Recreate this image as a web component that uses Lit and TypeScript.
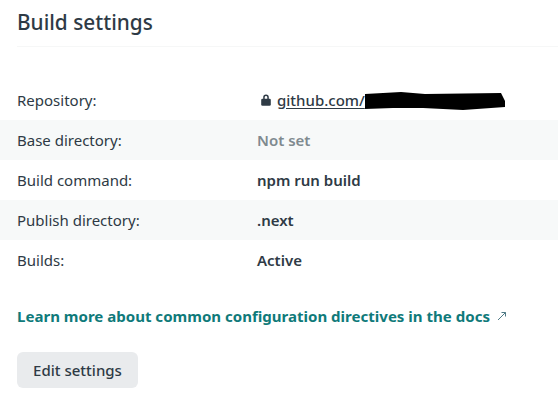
import { LitElement, html, css } from "lit";
import { customElement } from "lit/decorators.js";

const rows: [string, string, string][] = [
  ["Base directory:", "Not set", "muted"],
  ["Build command:", "npm run build", ""],
  ["Publish directory:", ".next", ""],
  ["Builds:", "Active", ""],
];

@customElement("app-root")
export class AppRoot extends LitElement {
  static styles = css`
    :host {
      display: block;
      width: 558px;
      height: 407px;
      overflow: hidden;
      background: #fff;
      font-family: "Noto Sans", "Open Sans", sans-serif;
      color: #2e3a45;
      font-size: 15px;
    }
    .head { padding: 0 0 0 17px; }
    h1 {
      margin: 0;
      height: 47px;
      box-sizing: border-box;
      padding-top: 7px;
      font-size: 20.8px;
      line-height: 30px;
      font-weight: 500;
      color: #2e3a45;
      border-bottom: 1px solid #f6f7f7;
    }
    .list { margin-top: 33px; }
    .row {
      display: grid;
      grid-template-columns: 240px 1fr;
      height: 40px;
      align-items: center;
      padding-left: 17px;
    }
    .row:nth-child(even) { background: #f7f9f9; }
    .value { font-weight: 600; color: #2e3a45; }
    .muted { color: #7f8a8f; }
    .repo { display: flex; align-items: center; gap: 5px; font-weight: 500; padding-left: 3px; }
    .repo a { color: #2e3a45; text-decoration: underline; text-underline-offset: 2px; }
    .repo .wrap { display: flex; align-items: center; }
    .scribble { display: block; margin-left: -2px; }
    .doc {
      display: flex;
      align-items: center;
      gap: 7px;
      margin: 25px 0 0 17px;
      height: 22px;
      font-size: 15.06px;
      font-weight: 700;
      color: #0f7a7a;
      text-decoration: none;
    }
    .doc svg { display: block; }
    button {
      display: block;
      margin: 25px 0 0 17px;
      width: 121px;
      height: 36px;
      border: 0;
      border-radius: 6px;
      background: #e9ebed;
      color: #2e3a45;
      font: 500 15px "Noto Sans", "Open Sans", sans-serif;
      padding: 0;
    }
  `;

  render() {
    return html`
      <div class="head"><h1>Build settings</h1></div>
      <div class="list">
        <div class="row">
          <span>Repository:</span>
          <span class="repo">
            <svg width="12" height="14" viewBox="0 0 12 14" fill="#2e3a45">
              <path d="M3.2 6V4.2a2.8 2.8 0 0 1 5.6 0V6H7.3V4.2a1.3 1.3 0 0 0-2.6 0V6z" />
              <rect x="1.2" y="5.8" width="9.6" height="7" rx="1.3" />
            </svg>
            <span class="wrap">
              <a>github.com/</a>
              <svg class="scribble" width="142" height="22" viewBox="0 0 142 22" fill="#000">
                <path d="M2 5 L38 3 L62 5 L138 4 L142 12 L142 18 L100 21 L60 19 L30 19 L2 20 Z" />
              </svg>
            </span>
          </span>
        </div>
        ${rows.map(
          ([k, v, c]) => html`
            <div class="row">
              <span>${k}</span>
              <span class="value ${c}">${v}</span>
            </div>
          `
        )}
      </div>
      <a class="doc">
        Learn more about common configuration directives in the docs
        <svg width="10" height="10" viewBox="0 0 10 10" fill="none" stroke="#4f7a86" stroke-width="1">
          <path d="M1 9 L8.5 1.5 M4.5 1.5 H8.5 V5.5" />
        </svg>
      </a>
      <button>Edit settings</button>
    `;
  }
}
